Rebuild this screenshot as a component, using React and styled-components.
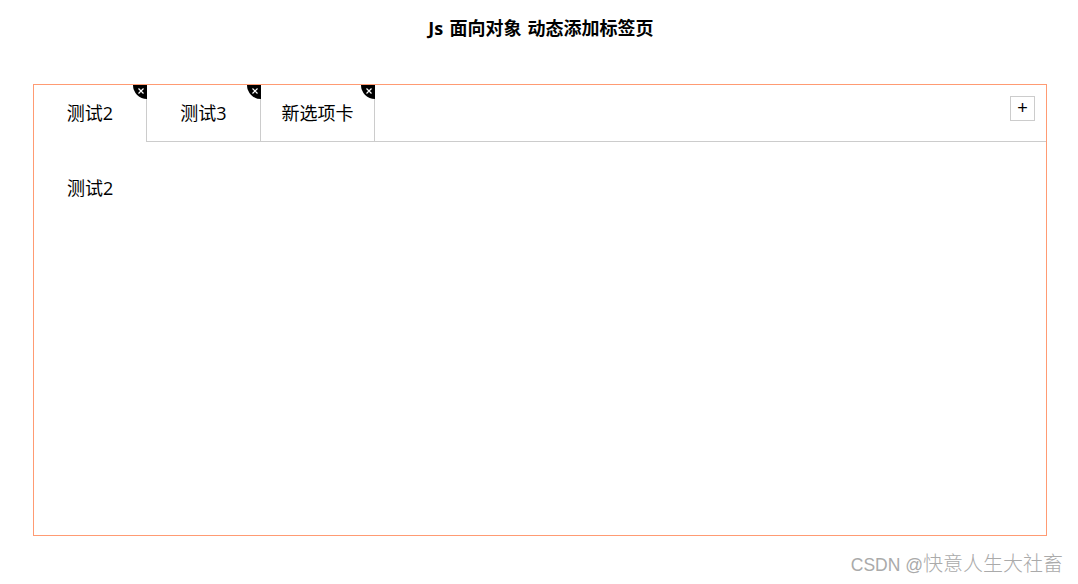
import React, { useState } from 'react';
import styled, { createGlobalStyle } from 'styled-components';

const GlobalStyle = createGlobalStyle`
  html, body {
    margin: 0;
    padding: 0;
    background: #fff;
    overflow: hidden;
  }
  body {
    font-family: "Open Sans", "Noto Sans CJK SC", sans-serif;
    color: #000;
  }
`;

const Page = styled.div`
  width: 1078px;
  height: 584px;
  display: flex;
  flex-direction: column;
  box-sizing: border-box;
  padding: 16px 0 0 33px;
`;

const Title = styled.h2`
  width: 1016px;
  margin: 0 0 44px;
  height: 24px;
  line-height: 24px;
  font-size: 18px;
  font-weight: 700;
  word-spacing: 1.5px;
  text-align: center;
`;

const Panel = styled.div`
  width: 1014px;
  height: 452px;
  box-sizing: border-box;
  border: 1px solid #ff9b73;
  display: flex;
  flex-direction: column;
`;

const TabBar = styled.div`
  height: 57px;
  box-sizing: border-box;
  flex: none;
  display: flex;
  align-items: flex-start;
  justify-content: space-between;
  border-bottom: 1px solid #ccc;
`;

const TabList = styled.ul`
  display: flex;
  list-style: none;
  margin: 0;
  padding: 0;
`;

const Tab = styled.li`
  position: relative;
  width: 114px;
  height: 57px;
  box-sizing: border-box;
  padding-bottom: 3px;
  display: flex;
  align-items: center;
  justify-content: center;
  font-size: 18px;
  border-right: 1px solid #ccc;
  background: ${(props) => (props.$active ? '#fff' : 'transparent')};
  cursor: pointer;

  &:first-child {
    width: 113px;
  }
`;

const CloseBadge = styled.span`
  position: absolute;
  top: 0;
  right: -1px;
  width: 14px;
  height: 14px;
  background: #000;
  border-bottom-left-radius: 14px;
  color: #fff;
  display: flex;
  align-items: center;
  justify-content: center;
`;

const CloseIcon = styled.svg`
  width: 6px;
  height: 6px;
  margin: 0 0 2px 1px;
`;

const AddButton = styled.button`
  width: 25px;
  height: 25px;
  margin: 11px 11px 0 0;
  padding: 0;
  box-sizing: border-box;
  border: 1px solid #ccc;
  background: #fff;
  color: #000;
  font-family: "Liberation Sans", sans-serif;
  font-size: 18px;
  line-height: 21px;
  cursor: pointer;
`;

const Content = styled.div`
  flex: 1;
  padding: 33px 33px 0;
  font-size: 18px;
  line-height: 26px;
`;

const Watermark = styled.div`
  align-self: flex-end;
  margin: 14px 15px 0 0;
  height: 26px;
  line-height: 26px;
  font-family: "Noto Sans CJK SC", sans-serif;
  font-weight: 300;
  font-size: 20px;
  color: #aaa;
  white-space: nowrap;
`;

const WatermarkLatin = styled.span`
  font-family: "Liberation Sans", sans-serif;
  font-size: 17.5px;
`;

const initialTabs = [
  { id: 1, name: '测试2' },
  { id: 2, name: '测试3' },
  { id: 3, name: '新选项卡' },
];

export default function App() {
  const [tabs, setTabs] = useState(initialTabs);
  const [activeId, setActiveId] = useState(1);
  const active = tabs.find((tab) => tab.id === activeId);

  function addTab() {
    const id = Date.now();
    setTabs([...tabs, { id, name: '新选项卡' }]);
    setActiveId(id);
  }

  return (
    <Page>
      <GlobalStyle />
      <Title>Js 面向对象 动态添加标签页</Title>
      <Panel>
        <TabBar>
          <TabList>
            {tabs.map((tab) => (
              <Tab key={tab.id} $active={tab.id === activeId} onClick={() => setActiveId(tab.id)}>
                {tab.name}
                <CloseBadge>
                  <CloseIcon viewBox="0 0 6 6">
                    <path d="M0.5 0.5L5.5 5.5M5.5 0.5L0.5 5.5" stroke="currentColor" strokeWidth="1.2" />
                  </CloseIcon>
                </CloseBadge>
              </Tab>
            ))}
          </TabList>
          <AddButton onClick={addTab}>+</AddButton>
        </TabBar>
        <Content>{active ? active.name : ''}</Content>
      </Panel>
      <Watermark>
        <WatermarkLatin>CSDN @</WatermarkLatin>快意人生大社畜
      </Watermark>
    </Page>
  );
}
